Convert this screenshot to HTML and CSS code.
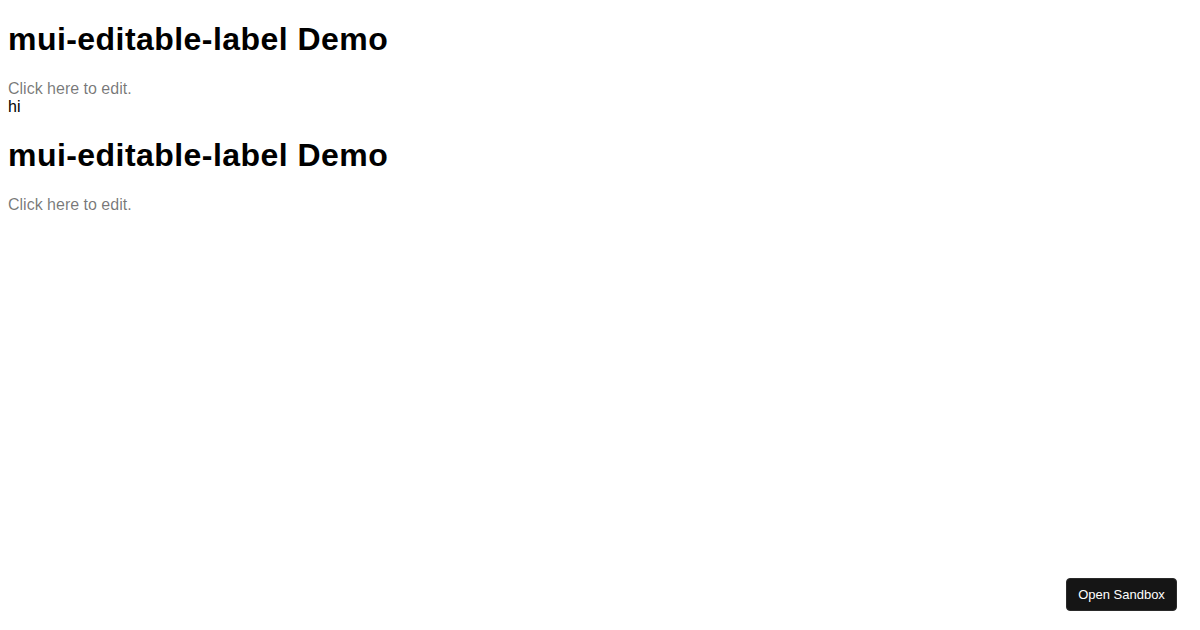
FILE: index.html
```html
<!DOCTYPE html>
<html>
<head>
<meta charset="utf-8">
<link rel="stylesheet" href="styles.css">
</head>
<body>
<div class="demo">
  <h1 class="title">mui-editable-label Demo</h1>
  <div class="label placeholder">Click here to edit.</div>
  <div class="label">hi</div>
</div>
<div class="demo">
  <h1 class="title">mui-editable-label Demo</h1>
  <div class="label placeholder">Click here to edit.</div>
</div>
<a class="sandbox-btn" href="#">Open Sandbox</a>
</body>
</html>
```
FILE: styles.css
```css
html, body {
  background: #fff;
}
body {
  margin: 0;
  padding: 0 8px;
  font-family: "Liberation Sans", Arial, sans-serif;
  color: #000;
}
.title {
  font-size: 32px;
  font-weight: bold;
  margin: 21.44px 0;
  line-height: 37px;
  letter-spacing: 0.45px;
}
.label {
  font-size: 16px;
  line-height: 18px;
}
.placeholder {
  color: rgba(0, 0, 0, 0.54);
}
.sandbox-btn {
  position: fixed;
  right: 23px;
  bottom: 19px;
  width: 111px;
  height: 33px;
  box-sizing: border-box;
  display: flex;
  align-items: center;
  justify-content: center;
  background: #151515;
  color: #fff;
  border-radius: 4px;
  border: 1px solid #2a2a2a;
  font-family: "Liberation Sans", Arial, sans-serif;
  font-size: 13px;
  text-decoration: none;
}
```
